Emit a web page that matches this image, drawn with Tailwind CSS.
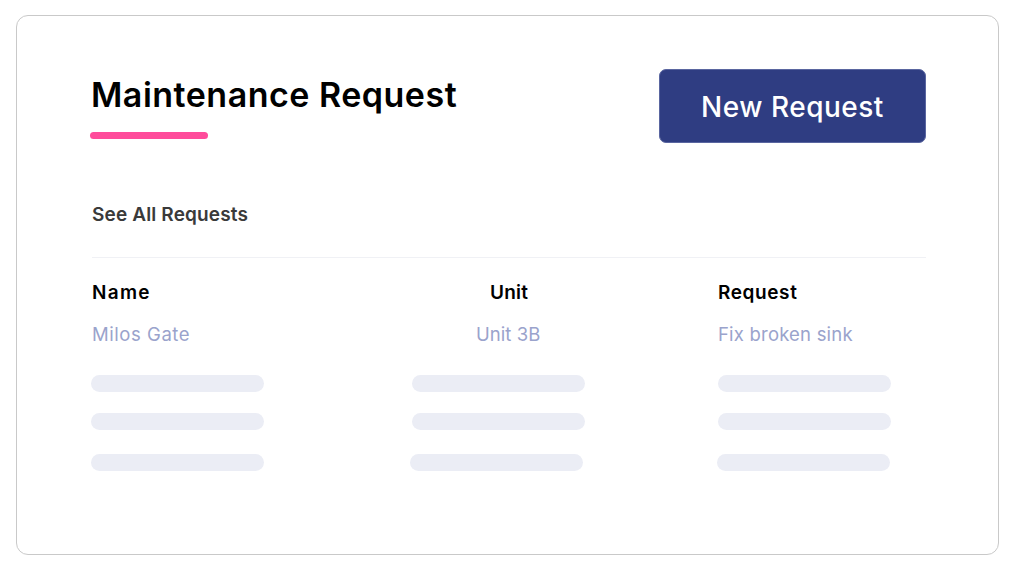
<!DOCTYPE html>
<html>
<head>
<meta charset="utf-8">
<script src="https://cdn.jsdelivr.net/npm/@tailwindcss/browser@4"></script>
</head>
<body class="bg-white">
<div class="w-[1024px] h-[584px] overflow-hidden pt-[15px] pl-[16px] font-['Inter','Liberation_Sans',sans-serif]">
  <div class="w-[983px] h-[540px] border border-[#c9c9c9] rounded-[12px] pl-[75px] pr-[72px] pt-[53px]">
    <div class="flex justify-between items-start">
      <div class="pt-[2px] -ml-[1px]">
        <h1 class="text-[34px] leading-[48px] font-semibold text-black tracking-[0.5px] whitespace-nowrap">Maintenance Request</h1>
        <div class="w-[118px] h-[7px] mt-[13px] -ml-[1px] rounded-full bg-[#ff4b9b]"></div>
      </div>
      <button class="w-[267px] h-[74px] pt-[2px] rounded-[7px] bg-[#2f3d82] border border-[#5a66a0] text-white text-[28px] tracking-[0.5px] font-medium flex items-center justify-center">New Request</button>
    </div>
    <p class="mt-[57px] text-[19px] leading-[30px] font-semibold tracking-[0.15px] text-[#3a3a3a]">See All Requests</p>
    <div class="mt-[27px] h-px bg-[#f0f1f5]"></div>
    <div class="mt-[20px] grid grid-cols-[398px_228px_1fr] text-[19px] leading-[30px] font-semibold text-black">
      <div class="tracking-[1.3px]">Name</div><div class="tracking-[0.2px]">Unit</div><div class="tracking-[0.6px]">Request</div>
    </div>
    <div class="mt-[11px] grid grid-cols-[384px_242px_1fr] text-[18.5px] leading-[30px] text-[#9aa3cc]">
      <div class="tracking-[0.55px]">Milos Gate</div><div class="tracking-[0.05px]">Unit 3B</div><div class="tracking-[0.2px]">Fix broken sink</div>
    </div>
    <div class="mt-[26px] -ml-[1px] grid grid-cols-[321px_306px_1fr]">
      <div class="w-[173px] h-[17px] rounded-full bg-[#ebedf5]"></div><div class="w-[173px] h-[17px] rounded-full bg-[#ebedf5]"></div><div class="w-[173px] h-[17px] rounded-full bg-[#ebedf5]"></div>
    </div>
    <div class="mt-[21px] -ml-[1px] grid grid-cols-[321px_306px_1fr]">
      <div class="w-[173px] h-[17px] rounded-full bg-[#ebedf5]"></div><div class="w-[173px] h-[17px] rounded-full bg-[#ebedf5]"></div><div class="w-[173px] h-[17px] rounded-full bg-[#ebedf5]"></div>
    </div>
    <div class="mt-[24px] -ml-[1px] grid grid-cols-[319px_307px_1fr]">
      <div class="w-[173px] h-[17px] rounded-full bg-[#ebedf5]"></div><div class="w-[173px] h-[17px] rounded-full bg-[#ebedf5]"></div><div class="w-[173px] h-[17px] rounded-full bg-[#ebedf5]"></div>
    </div>
  </div>
</div>
</body>
</html>
